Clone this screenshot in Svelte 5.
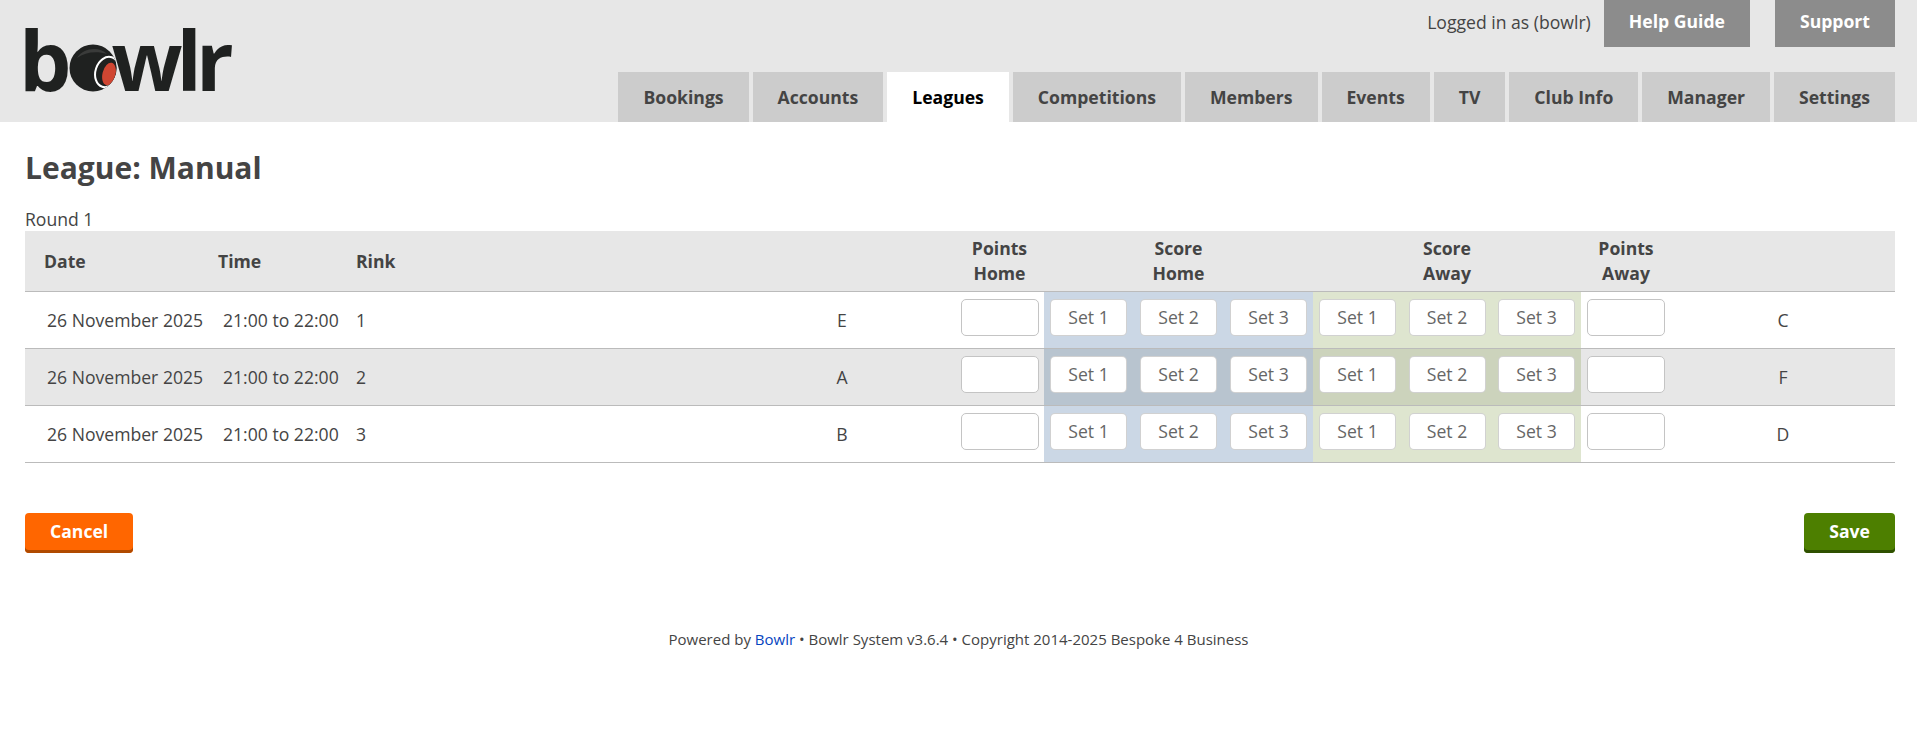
<script>
  const tabs = ['Bookings', 'Accounts', 'Leagues', 'Competitions', 'Members', 'Events', 'TV', 'Club Info', 'Manager', 'Settings'];
  const games = [
    { rink: 1, home: 'E', away: 'C' },
    { rink: 2, home: 'A', away: 'F' },
    { rink: 3, home: 'B', away: 'D' }
  ];
  const sets = ['Set 1', 'Set 2', 'Set 3'];
</script>

<header class="top">
  <a class="logo" href="#home">
    <span>b</span>
    <svg class="ball" width="48" height="48" viewBox="0 0 48 48">
      <defs>
        <clipPath id="ball-clip"><circle cx="24" cy="24" r="23.5" /></clipPath>
      </defs>
      <circle cx="24" cy="24" r="23.5" fill="#1f2120" />
      <path d="M8 14 C14 4 30 2 38 10 C28 7 16 8 8 14 Z" fill="#3a3b3a" />
      <g clip-path="url(#ball-clip)">
        <ellipse cx="38" cy="28" rx="11.5" ry="15.5" transform="rotate(18 38 28)" fill="#1f2120" stroke="#fff" stroke-width="2" />
        <ellipse cx="40" cy="30" rx="6.5" ry="11.5" transform="rotate(14 40 30)" fill="#d04632" />
      </g>
    </svg>
    <span class="rest">wlr</span>
  </a>
  <div class="right">
    <div class="account">
      <span class="who">Logged in as (bowlr)</span>
      <a class="util" href="#help">Help Guide</a>
      <a class="util support" href="#support">Support</a>
    </div>
    <nav class="tabs">
      {#each tabs as tab}
        <a href="#tab" class:active={tab === 'Leagues'}>{tab}</a>
      {/each}
    </nav>
  </div>
</header>

<main>
  <h1>League: Manual</h1>
  <div class="round">Round 1</div>
  <table>
    <colgroup>
      <col style="width:190px" />
      <col style="width:135px" />
      <col style="width:379px" />
      <col style="width:226px" />
      <col style="width:89px" />
      <col style="width:269px" />
      <col style="width:268px" />
      <col style="width:90px" />
      <col />
    </colgroup>
    <thead>
      <tr>
        <th class="date">Date</th>
        <th class="time">Time</th>
        <th class="rink">Rink</th>
        <th></th>
        <th>Points<br />Home</th>
        <th>Score<br />Home</th>
        <th>Score<br />Away</th>
        <th>Points<br />Away</th>
        <th></th>
      </tr>
    </thead>
    <tbody>
      {#each games as game}
        <tr>
          <td class="date">26 November 2025</td>
          <td class="time">21:00 to 22:00</td>
          <td class="rink">{game.rink}</td>
          <td class="team">{game.home}</td>
          <td class="input-cell"><input class="points" type="text" /></td>
          <td class="input-cell home">
            <div class="sets">
              {#each sets as set}<input type="text" placeholder={set} />{/each}
            </div>
          </td>
          <td class="input-cell away">
            <div class="sets">
              {#each sets as set}<input type="text" placeholder={set} />{/each}
            </div>
          </td>
          <td class="input-cell"><input class="points" type="text" /></td>
          <td class="team">{game.away}</td>
        </tr>
      {/each}
    </tbody>
  </table>

  <div class="actions">
    <button class="cancel">Cancel</button>
    <button class="save">Save</button>
  </div>
</main>

<footer>
  Powered by <a href="#bowlr">Bowlr</a> • Bowlr System v3.6.4 • Copyright 2014-2025 Bespoke 4 Business
</footer>

<style>
  :global(body) {
    margin: 0;
    background: #fff;
    color: #444;
    font-family: "Open Sans", "Liberation Sans", sans-serif;
    font-size: 17.6px;
  }

  .top {
    display: flex;
    justify-content: space-between;
    height: 122px;
    padding: 0 22px 0 25px;
    background: #e7e7e7;
  }

  .logo {
    display: flex;
    align-items: flex-start;
    height: 122px;
    margin-left: -6px;
    color: #1f2120;
    font-size: 83px;
    font-weight: 700;
    line-height: 117px;
    text-decoration: none;
  }

  .ball {
    margin: 44px -5px 0 -3px;
  }

  .rest {
    letter-spacing: -6px;
  }

  .account {
    display: flex;
    justify-content: flex-end;
    align-items: center;
    height: 47px;
    margin-bottom: 25px;
  }

  .who {
    margin-right: 13px;
    padding-bottom: 4px;
  }

  .util {
    display: block;
    padding: 0 25px 4px;
    background: #8c8c8c;
    color: #fff;
    font-size: 17.6px;
    font-weight: 700;
    line-height: 43px;
    text-decoration: none;
  }

  .support {
    margin-left: 25px;
  }

  .tabs {
    display: flex;
    gap: 4px;
  }

  .tabs a {
    padding: 0 25px;
    background: #ccc;
    color: #444;
    font-size: 17.6px;
    font-weight: 700;
    line-height: 50px;
    text-decoration: none;
  }

  .tabs a.active {
    background: #fff;
    color: #000;
  }

  main {
    padding: 0 22px 0 25px;
  }

  h1 {
    margin: 0;
    padding-top: 26px;
    font-size: 30px;
    font-weight: 700;
    line-height: 40px;
  }

  .round {
    margin-top: 21px;
    line-height: 20px;
    padding-bottom: 2px;
  }

  table {
    width: 1870px;
    table-layout: fixed;
    border-collapse: collapse;
  }

  th,
  td {
    box-sizing: border-box;
    padding: 0;
    border-bottom: 1px solid #bbb;
  }

  th {
    height: 60px;
    padding-top: 1px;
    background: #e7e7e7;
    font-size: 17.6px;
    font-weight: 700;
    line-height: 25px;
    text-align: center;
  }

  td {
    height: 57px;
    line-height: 22px;
  }

  tbody tr:nth-child(even) td {
    background: #e7e7e7;
  }

  th.date {
    padding-left: 19px;
    text-align: left;
  }

  th.time {
    padding-left: 3px;
    text-align: left;
  }

  th.rink,
  td.rink {
    padding-left: 6px;
    text-align: left;
  }

  td.date {
    padding-left: 22px;
  }

  td.time {
    padding-left: 8px;
  }

  .team {
    text-align: center;
  }

  .input-cell {
    vertical-align: top;
    padding-top: 7px;
    text-align: center;
  }

  td.home {
    background: #cbd7e5;
  }

  tbody tr:nth-child(even) td.home {
    background: #b8c4cf;
  }

  td.away {
    background: #dee5cf;
  }

  tbody tr:nth-child(even) td.away {
    background: #ccd3bc;
  }

  .sets {
    display: flex;
    justify-content: space-between;
    padding: 0 6px;
  }

  input {
    box-sizing: border-box;
    display: block;
    width: 77px;
    height: 37px;
    padding: 0 4px;
    background: #fff;
    border: 1px solid rgba(0, 0, 0, 0.18);
    border-radius: 5px;
    color: #444;
    font: 17.6px "Open Sans", "Liberation Sans", sans-serif;
    text-align: center;
  }

  input::placeholder {
    color: #666;
    opacity: 1;
  }

  input.points {
    margin: 0 auto;
    width: 78px;
    border-color: #c4c4c4;
  }

  .actions {
    display: flex;
    justify-content: space-between;
    margin-top: 50px;
  }

  .actions button {
    height: 40px;
    padding: 0 25px 4px;
    border: 0;
    border-radius: 4px;
    color: #fff;
    font: 700 17.6px "Open Sans", "Liberation Sans", sans-serif;
  }

  .cancel {
    background: #f60;
    box-shadow: inset 0 -3px 0 #b04a00;
  }

  .save {
    background: #4d7f00;
    box-shadow: inset 0 -3px 0 #2f5000;
  }

  footer {
    margin-top: 76px;
    font-size: 15px;
    line-height: 20px;
    text-align: center;
  }

  footer a {
    color: #0645c0;
    text-decoration: none;
  }
</style>
